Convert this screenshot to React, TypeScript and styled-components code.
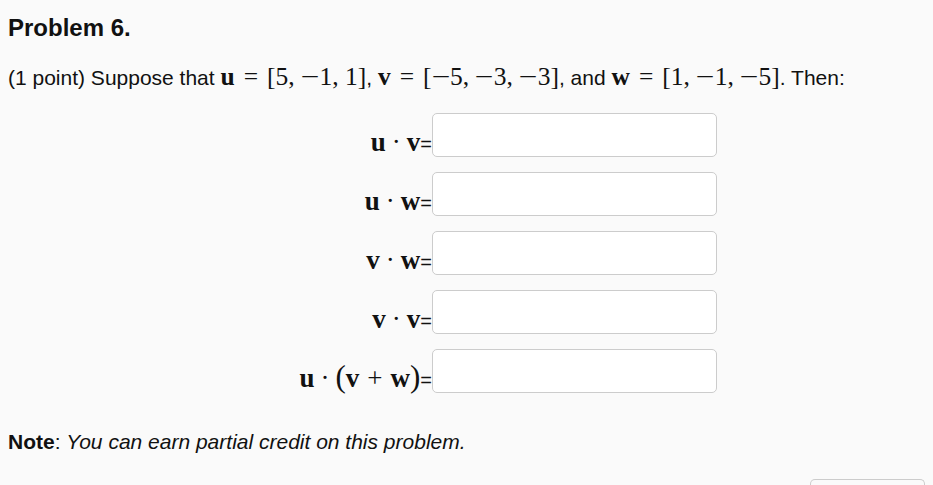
import React from "react";
import styled, { createGlobalStyle } from "styled-components";

const GlobalStyle = createGlobalStyle`
  html, body {
    margin: 0;
    padding: 0;
    background: #fafafa;
    overflow: hidden;
  }
  body {
    font-family: "Liberation Sans", Arial, sans-serif;
    color: #111;
  }
`;

const Page = styled.div`
  display: flex;
  flex-direction: column;
  padding: 0 8px;
  height: 485px;
  box-sizing: border-box;
`;

const Title = styled.h3`
  margin: 14px 0 0;
  font-size: 24px;
  line-height: 28px;
  font-weight: bold;
`;

const Intro = styled.p`
  margin: 20px 0 0;
  font-size: 21px;
  line-height: 30px;
`;

const Math = styled.span<{ $size?: number }>`
  font-family: "Liberation Serif", "Times New Roman", serif;
  font-size: ${({ $size }) => $size ?? 25.5}px;
`;

const V = styled.span<{ $size?: number }>`
  font-family: "Liberation Serif", "Times New Roman", serif;
  font-weight: bold;
  font-size: ${({ $size }) => $size ?? 25.5}px;
`;

const Op = styled.span<{ $gap?: number; $size?: number }>`
  font-family: "Liberation Serif", "Times New Roman", serif;
  font-size: ${({ $size }) => $size ?? 25.5}px;
  padding: 0 ${({ $gap }) => $gap ?? 9}px;
`;

const Minus = styled.span`
  display: inline-block;
  padding-left: 4px;
  transform: scaleX(1.3);
  transform-origin: right center;
`;

const Answers = styled.div`
  display: grid;
  grid-template-columns: 424px 285px;
  row-gap: 15px;
  margin-top: 20px;
`;

const Label = styled.div`
  display: flex;
  align-items: baseline;
  justify-content: flex-end;
  align-self: end;
  line-height: 26px;
  padding-bottom: 0;
`;

const Eq = styled.span`
  font-family: "Liberation Sans", Arial, sans-serif;
  font-size: 20px;
`;

const Input = styled.input`
  box-sizing: border-box;
  width: 285px;
  height: 44px;
  margin: 0;
  border: 1px solid #cccccc;
  border-radius: 5px;
  background: #ffffff;
  font-size: 18px;
  padding: 4px 8px;
`;

const Note = styled.p`
  margin: 35px 0 0;
  font-size: 21px;
  line-height: 28px;

  em {
    font-style: italic;
  }
`;

const Footer = styled.div`
  display: flex;
  margin-top: auto;
  padding-left: 802px;
`;

const Stub = styled.div`
  width: 160px;
  height: 5px;
  border: 1px solid #cccccc;
  border-bottom: none;
  border-radius: 5px 5px 0 0;
  background: #fafafa;
`;

const Num = ({ n }: { n: number }) =>
  n < 0 ? (
    <>
      <Minus>−</Minus>
      {-n}
    </>
  ) : (
    <>{n}</>
  );

const Vec = ({ items }: { items: number[] }) => (
  <Math>
    [
    {items.map((n, i) => (
      <React.Fragment key={i}>
        <Num n={n} />
        {i < items.length - 1 ? ", " : ""}
      </React.Fragment>
    ))}
    ]
  </Math>
);

const L = 27;
const Dot = () => (
  <Op $gap={6} $size={L}>
    ·
  </Op>
);

const rows: React.ReactNode[] = [
  <>
    <V $size={L}>u</V>
    <Dot />
    <V $size={L}>v</V>
  </>,
  <>
    <V $size={L}>u</V>
    <Dot />
    <V $size={L}>w</V>
  </>,
  <>
    <V $size={L}>v</V>
    <Dot />
    <V $size={L}>w</V>
  </>,
  <>
    <V $size={L}>v</V>
    <Dot />
    <V $size={L}>v</V>
  </>,
  <>
    <V $size={L}>u</V>
    <Dot />
    <Math $size={L + 4}>(</Math>
    <V $size={L}>v</V>
    <Op $size={L} $gap={8}>
      +
    </Op>
    <V $size={L}>w</V>
    <Math $size={L + 4}>)</Math>
  </>,
];

export default function App() {
  return (
    <>
      <GlobalStyle />
      <Page>
        <Title>Problem 6.</Title>
        <Intro>
          (1 point) Suppose that <V>u</V>
          <Op>=</Op>
          <Vec items={[5, -1, 1]} />, <V>v</V>
          <Op>=</Op>
          <Vec items={[-5, -3, -3]} />, and <V>w</V>
          <Op>=</Op>
          <Vec items={[1, -1, -5]} />. Then:
        </Intro>
        <Answers>
          {rows.map((label, i) => (
            <React.Fragment key={i}>
              <Label>
                {label}
                <Eq>=</Eq>
              </Label>
              <Input type="text" />
            </React.Fragment>
          ))}
        </Answers>
        <Note>
          <b>Note</b>: <em>You can earn partial credit on this problem.</em>
        </Note>
        <Footer>
          <Stub />
        </Footer>
      </Page>
    </>
  );
}
